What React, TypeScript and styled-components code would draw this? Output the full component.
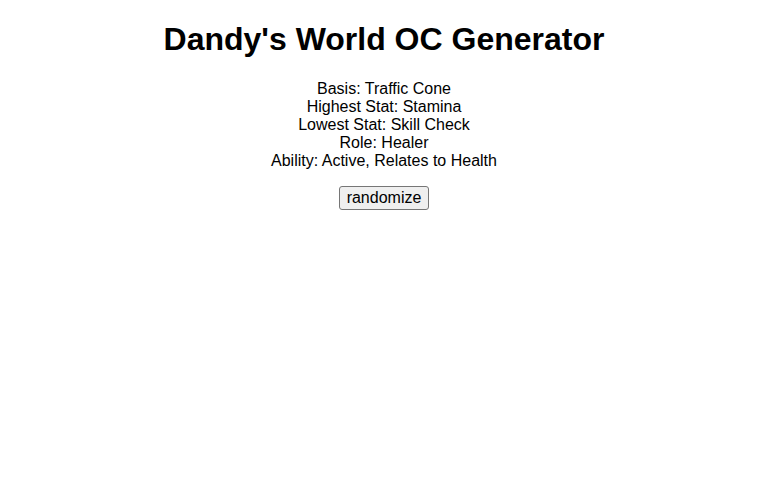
import React, { useState } from "react";
import styled, { createGlobalStyle } from "styled-components";

const GlobalStyle = createGlobalStyle`
  body {
    margin: 0 8px 8px;
    background: #ffffff;
    color: #000000;
    font-family: "Liberation Sans", Arial, sans-serif;
  }
`;

const Page = styled.main`
  text-align: center;
`;

const Title = styled.h1`
  font-size: 32px;
  font-weight: bold;
  margin: 21.44px 0;
`;

const Traits = styled.div`
  font-size: 16px;
  line-height: 18px;
  margin-bottom: 16px;
`;

const Trait = styled.div``;

const RandomizeButton = styled.button`
  font-family: "Liberation Sans", Arial, sans-serif;
  font-size: 16px;
  line-height: 18px;
  color: #000000;
  background: #efefef;
  border: 1px solid #767676;
  border-radius: 3px;
  padding: 2px 7px;
  cursor: pointer;
`;

const bases = ["Traffic Cone", "Lamp", "Teapot", "Balloon", "Mushroom"];
const stats = ["Stamina", "Skill Check", "Speed", "Stealth", "Extraction Speed", "Movement Speed"];
const roles = ["Healer", "Support", "Tank", "Distractor"];
const abilities = [
  "Active, Relates to Health",
  "Passive, Relates to Speed",
  "Active, Relates to Items",
];

const pick = <T,>(list: T[]) => list[Math.floor(Math.random() * list.length)];

export default function App() {
  const [oc, setOc] = useState({
    basis: "Traffic Cone",
    highest: "Stamina",
    lowest: "Skill Check",
    role: "Healer",
    ability: "Active, Relates to Health",
  });

  const randomize = () =>
    setOc({
      basis: pick(bases),
      highest: pick(stats),
      lowest: pick(stats),
      role: pick(roles),
      ability: pick(abilities),
    });

  return (
    <Page>
      <GlobalStyle />
      <Title>Dandy's World OC Generator</Title>
      <Traits>
        <Trait>Basis: {oc.basis}</Trait>
        <Trait>Highest Stat: {oc.highest}</Trait>
        <Trait>Lowest Stat: {oc.lowest}</Trait>
        <Trait>Role: {oc.role}</Trait>
        <Trait>Ability: {oc.ability}</Trait>
      </Traits>
      <RandomizeButton onClick={randomize}>randomize</RandomizeButton>
    </Page>
  );
}
